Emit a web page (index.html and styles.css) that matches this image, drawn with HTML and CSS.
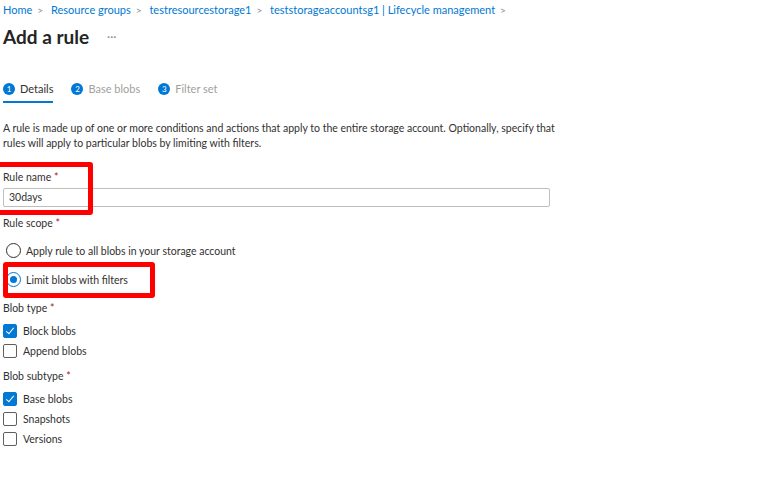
FILE: index.html
```html
<!DOCTYPE html>
<html lang="en">
<head>
  <meta charset="UTF-8">
  <title>Add a rule</title>
  <link rel="stylesheet" href="styles.css">
</head>
<body>

  <nav class="crumbs">
    <a>Home</a><span class="sep">&gt;</span>
    <a>Resource groups</a><span class="sep">&gt;</span>
    <a>testresourcestorage1</a><span class="sep">&gt;</span>
    <a>teststorageaccountsg1 | Lifecycle management</a><span class="sep">&gt;</span>
  </nav>

  <div class="title-row">
    <h1>Add a rule</h1>
    <span class="more">&middot;&middot;&middot;</span>
  </div>

  <div class="tabs">
    <div class="tab active"><span class="num">1</span>Details</div>
    <div class="tab"><span class="num">2</span>Base blobs</div>
    <div class="tab"><span class="num">3</span>Filter set</div>
  </div>

  <p class="intro">A rule is made up of one or more conditions and actions that apply to the entire storage account. Optionally, specify that rules will apply to particular blobs by limiting with filters.</p>

  <div class="field field-name">
    <label class="label">Rule name <span class="req">*</span></label>
    <div class="input">30days</div>
  </div>

  <div class="field field-scope">
    <div class="label">Rule scope <span class="req">*</span></div>
    <div class="radios">
      <div class="radio"><span class="dot"></span>Apply rule to all blobs in your storage account</div>
      <div class="radio on"><span class="dot"></span>Limit blobs with filters</div>
    </div>
  </div>

  <div class="field field-type">
    <div class="label">Blob type <span class="req">*</span></div>
    <div class="checks">
      <div class="check on"><span class="box"></span>Block blobs</div>
      <div class="check"><span class="box"></span>Append blobs</div>
    </div>
  </div>

  <div class="field field-subtype">
    <div class="label">Blob subtype <span class="req">*</span></div>
    <div class="checks">
      <div class="check on"><span class="box"></span>Base blobs</div>
      <div class="check"><span class="box"></span>Snapshots</div>
      <div class="check"><span class="box"></span>Versions</div>
    </div>
  </div>

  <!-- highlight frames -->
  <div class="mark mark-name"></div>
  <div class="mark mark-scope"></div>

</body>
</html>
```

FILE: styles.css
```css
body {
  margin: 0;
  padding: 0 3px;
  font-family: Lato, "Liberation Sans", sans-serif;
  font-size: 10.5px;
  color: #323130;
  background: #fff;
  position: relative;
  height: 478px;
  overflow: hidden;
}

.crumbs {
  padding-top: 2px;
  font-size: 11px;
  line-height: 16px;
  white-space: nowrap;
}

.crumbs a {
  color: #0078d4;
}

.crumbs .sep {
  color: #8a8886;
  margin: 0 5px;
  font-size: 10px;
}

.title-row {
  display: flex;
  align-items: center;
  margin-top: 5px;
  height: 26px;
}

h1 {
  margin: 0;
  font-size: 19px;
  font-weight: 700;
  color: #242424;
}

.more {
  margin-left: 18px;
  color: #8a8886;
  font-size: 12px;
}

.tabs {
  display: flex;
  gap: 18px;
  margin-top: 33px;
}

.tab {
  display: flex;
  align-items: center;
  gap: 5px;
  color: #a19f9d;
  font-size: 11px;
  padding: 0 0 6px;
  border-bottom: 2px solid transparent;
}

.tab.active {
  color: #323130;
  border-bottom-color: #0078d4;
}

.num {
  width: 12px;
  height: 12px;
  border-radius: 50%;
  background: #0078d4;
  color: #fff;
  font-size: 8px;
  line-height: 12px;
  text-align: center;
}

.intro {
  margin: 18px 0 0;
  width: 555px;
  line-height: 15px;
}

.field {
  margin-top: 7px;
}

.field-name {
  margin-top: 18px;
}

.field-scope {
  margin-top: 8px;
}

.field-type {
  margin-top: 6px;
}

.label {
  display: block;
  line-height: 16px;
}

.req {
  color: #a4262c;
}

.input {
  margin-top: 3px;
  width: 535px;
  height: 17px;
  line-height: 17px;
  padding: 0 5px;
  border: 1px solid #bebebe;
  border-radius: 2px;
}

.radios {
  margin-top: 5px;
}

.radio,
.check {
  display: flex;
  align-items: center;
  height: 21px;
}

.check + .check {
  height: 20px;
}

.radio {
  padding-left: 3px;
  height: 29px;
}

.dot {
  width: 15px;
  height: 15px;
  border: 1px solid #323130;
  border-radius: 50%;
  margin-right: 5px;
  box-sizing: border-box;
  position: relative;
}

.radio.on .dot {
  border-color: #0078d4;
}

.radio.on .dot::after {
  content: "";
  position: absolute;
  left: 3px;
  top: 3px;
  width: 7px;
  height: 7px;
  border-radius: 50%;
  background: #0078d4;
}

.checks {
  margin-top: 4px;
}

.box {
  width: 14px;
  height: 14px;
  border: 1px solid #605e5c;
  border-radius: 2px;
  margin-right: 6px;
  box-sizing: border-box;
  position: relative;
}

.check.on .box {
  background: #0078d4;
  border-color: #0078d4;
}

.check.on .box::after {
  content: "";
  position: absolute;
  left: 4px;
  top: 1px;
  width: 3px;
  height: 7px;
  border: solid #fff;
  border-width: 0 1px 1px 0;
  transform: rotate(40deg);
}

.mark {
  position: absolute;
  border: 5px solid #ff0000;
  border-radius: 3px;
}

.mark-name {
  left: -6px;
  top: 162px;
  width: 89px;
  height: 43px;
}

.mark-scope {
  left: 3px;
  top: 262px;
  width: 142px;
  height: 26px;
}
```
